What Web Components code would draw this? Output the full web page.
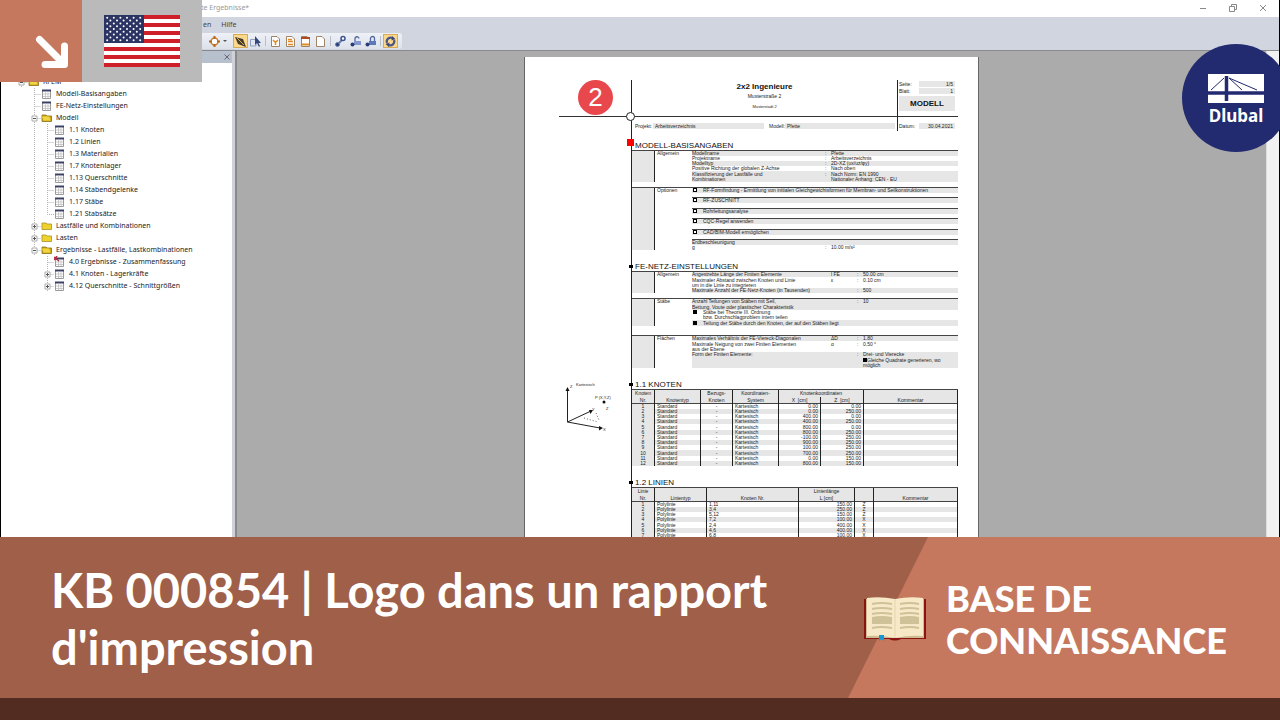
<!DOCTYPE html>
<html lang="fr">
<head>
<meta charset="utf-8">
<title>KB 000854 | Logo dans un rapport d'impression</title>
<style>
  body {
    margin: 0;
    font-family: "Liberation Sans", Arial, sans-serif;
  }
</style>
</head>
<body>
<kb-cover>
  <lang-badge slot="badge"></lang-badge>
  <dlubal-logo slot="logo"></dlubal-logo>
  <app-window slot="picture">
    <app-toolbar slot="toolbar"></app-toolbar>
    <nav-tree slot="tree"></nav-tree>
    <report-page></report-page>
  </app-window>
  <title-banner slot="banner">
    KB 000854 | Logo dans un rapport d'impression
    <span slot="category">BASE DE CONNAISSANCE</span>
  </title-banner>
</kb-cover>

<script>
class KbCover extends HTMLElement {
  constructor() {
    super();
    this.attachShadow({mode: 'open'}).innerHTML = `
      <style>
        :host {
          display: flex;
          flex-direction: column;
          height: 100vh;
          position: relative;
          overflow: hidden;
        }
        .picture {
          flex: 1;
          min-height: 0;
          display: flex;
        }
        ::slotted([slot=picture]) { flex: 1; min-width: 0; }
        ::slotted([slot=badge]) { position: absolute; left: 0; top: 0; }
        ::slotted([slot=logo]) { position: absolute; right: -10px; top: 44px; }
        footer { height: 22px; background: #522c20; }
      </style>
      <div class="picture"><slot name="picture"></slot></div>
      <slot name="banner"></slot>
      <footer></footer>
      <slot name="badge"></slot>
      <slot name="logo"></slot>
    `;
  }
}

class LangBadge extends HTMLElement {
  constructor() {
    super();
    this.attachShadow({mode: 'open'});
    this.render();
  }
  render() {
    let stripes = '';
    for (let i = 0; i < 13; i += 2) {
      stripes += `<rect y="${i * 4}" width="76" height="4" fill="#cf1f28"/>`;
    }
    let stars = '';
    for (let r = 0; r < 9; r++) {
      const count = r % 2 ? 5 : 6;
      for (let c = 0; c < count; c++) {
        stars += `<circle cx="${(r % 2 ? 6.4 : 3.2) + c * 6.6}" cy="${2.8 + r * 2.8}" r="1" fill="#fff"/>`;
      }
    }
    this.shadowRoot.innerHTML = `
      <style>
        :host { display: flex; }
        .arrow { width: 82px; height: 82px; background: #c5785e; }
        .flag {
          width: 120px;
          height: 82px;
          background: #bababa;
          display: grid;
          place-items: center;
        }
        svg { display: block; }
      </style>
      <div class="arrow">
        <svg width="82" height="82" fill="none" stroke="#fff" stroke-width="7" stroke-linecap="round" stroke-linejoin="round">
          <path d="M39.500 39.500L64 64M64.500 46V64.500H45"/>
        </svg>
      </div>
      <div class="flag">
        <svg width="76" height="52" role="img" aria-label="USA">
          <rect width="76" height="52" fill="#fff"/>
          ${stripes}
          <rect width="40" height="28" fill="#2b3563"/>
          ${stars}
        </svg>
      </div>
    `;
  }
}

class DlubalLogo extends HTMLElement {
  constructor() {
    super();
    this.attachShadow({mode: 'open'}).innerHTML = `
      <style>
        :host {
          display: flex;
          flex-direction: column;
          align-items: center;
          box-sizing: border-box;
          width: 108px;
          height: 108px;
          padding-top: 30px;
          border-radius: 50%;
          background: #222a70;
          color: #fff;
          font: bold 17px/26px "Noto Sans", "Open Sans", sans-serif;
        }
        svg { display: block; }
      </style>
      <svg width="56" height="29">
        <rect width="56" height="29" fill="#fff"/>
        <path d="M0 19H56" stroke="#222a70" stroke-width="3.500"/>
        <path d="M18.500 2V27" stroke="#222a70" stroke-width="3.500"/>
        <path d="M16 4L3 16M21 4L34 16M21 4L49 16" stroke="#222a70" stroke-width="1" fill="none"/>
      </svg>
      <span>Dlubal</span>
    `;
  }
}

class AppWindow extends HTMLElement {
  constructor() {
    super();
    this.attachShadow({mode: 'open'}).innerHTML = `
      <style>
        :host {
          display: flex;
          flex-direction: column;
          background: #fff;
          border-right: 1px solid #000;
          font: 7px/16px "Noto Sans", "Open Sans", sans-serif;
        }
        .title {
          display: flex;
          justify-content: space-between;
          height: 17px;
          padding: 0 6px 0 201px;
          color: #999;
        }
        .controls { display: flex; gap: 10px; }
        button {
          width: 20px;
          height: 16px;
          padding: 0;
          border: 0;
          background: none;
          color: #888;
        }
        .controls svg, .close svg { display: block; margin: auto; fill: none; stroke: currentColor; }
        .menu {
          display: flex;
          gap: 10px;
          height: 16px;
          padding-left: 203px;
          background: #d0d5df;
          color: #444;
        }
        .menu a { color: inherit; text-decoration: none; }
        .tools { background: #d0d5df; height: 17px; border-bottom: 1px solid #87898d; }
        .body {
          flex: 1;
          min-height: 0;
          display: flex;
          overflow: hidden;
        }
        .side {
          width: 232px;
          flex: none;
          box-sizing: border-box;
          border-left: 1px solid #000;
        }
        .side header {
          display: flex;
          justify-content: flex-end;
          height: 12px;
          background: #b7c1cd;
        }
        .close { width: 11px; height: 12px; color: #667; }
        .split {
          width: 3px;
          flex: none;
          background: #cfd1d6;
          border-right: 2px solid #87898d;
        }
        .work {
          flex: 1;
          min-width: 0;
          padding-top: 6px;
          background: #ababab;
          display: flex;
          justify-content: center;
          align-items: flex-start;
        }
        .scroll { width: 12px; background: #f1f1f1; border-left: 1px solid #ddd; }
      </style>
      <div class="title">
        <span>te Ergebnisse*</span>
        <div class="controls">
          <button aria-label="Minimieren"><svg width="8" height="8"><path d="M1 4.500H7"/></svg></button>
          <button aria-label="Wiederherstellen"><svg width="8" height="8"><path d="M.5 2.500H5.500V7.500H.5ZM2.500 2V.5H7.500V5.500H6"/></svg></button>
          <button aria-label="Beenden"><svg width="8" height="8"><path d="M1 1L7 7M7 1L1 7"/></svg></button>
        </div>
      </div>
      <nav class="menu"><a href="#">en</a><a href="#">Hilfe</a></nav>
      <div class="tools"><slot name="toolbar"></slot></div>
      <div class="body">
        <aside class="side">
          <header><button class="close" aria-label="Schließen"><svg width="6" height="6"><path d="M.5 .5L5.500 5.500M5.500 .5L.5 5.500"/></svg></button></header>
          <slot name="tree"></slot>
        </aside>
        <div class="split"></div>
        <main class="work"><slot></slot></main>
        <div class="scroll"></div>
      </div>
    `;
  }
}

const sheet = '<path d="M2.500 1.500H8L10.500 4V11.500H2.500Z" fill="#fff" stroke="#a08468"/>';
const toolIcons = {
  target: '<circle cx="6.500" cy="6.500" r="3.500" fill="#fff" stroke="#d08030" stroke-width="1.500"/><path d="M6.500 1V4M6.500 9V12M1 6.500H4M9 6.500H12" stroke="#b06a20" stroke-width="2"/>',
  pen: '<path d="M1 2L9 4L12 12L4 9Z" fill="#453c30"/><path d="M3 3L10 10" stroke="#e2a83c"/>',
  select: '<path d="M1.500 4.500H7V11H1.500Z" fill="#dfe6f4" stroke="#93a0bc"/><path d="M6 1V10L8 8L10 12L11 11L9.500 8H12Z" fill="#34487c"/>',
  sheetY: sheet + '<path d="M4 5L6.500 7.500L9 5M6.500 7V10" stroke="#e08a28" stroke-width="1.500" fill="none"/>',
  sheetLines: sheet + '<path d="M4 4.500H8M4 6.500H9M4 9.500H9" stroke="#e08a28" stroke-width="1.300"/>',
  sheetHead: sheet + '<path d="M2 3H11" stroke="#b04a20" stroke-width="2"/><path d="M3 9.500H10" stroke="#e08a28" stroke-width="2"/>',
  sheet: sheet,
  link: '<circle cx="3.500" cy="9.500" r="2" fill="#283c78" stroke="#6a7cae"/><path d="M5 8L8 5" stroke="#6a7cae" stroke-width="2"/><circle cx="9" cy="3.500" r="2" fill="#fff" stroke="#3c5392" stroke-width="1.500"/>',
  lockOpen: '<path d="M6 6V4A2 2 0 0 1 10 3.500" stroke="#53699f" stroke-width="1.300" fill="none"/><path d="M5 6H12V10H5Z" fill="#8498cf"/><circle cx="3.500" cy="9.500" r="2" fill="#283c78"/>',
  lock: '<path d="M6.500 6V3.500A2 2 0 0 1 10.500 3.500V6" stroke="#53699f" stroke-width="1.300" fill="none"/><path d="M5 6H12V10H5Z" fill="#5c78bc"/><circle cx="3.500" cy="9.500" r="2" fill="#283c78"/>',
  refresh: '<path d="M3 8A4 4 0 0 1 8.500 3M10 5A4 4 0 0 1 4.500 10" stroke="#4a5688" stroke-width="2.200" fill="none"/><path d="M8 1L11.500 4L7.500 5.500ZM5 12L1.500 9L5.500 7.500Z" fill="#3c4678"/>'
};

class AppToolbar extends HTMLElement {
  constructor() {
    super();
    this.attachShadow({mode: 'open'});
    this.render();
  }
  button(name, active) {
    return `<button class="${active ? 'active' : ''}" aria-label="${name}"><svg width="13" height="13">${toolIcons[name]}</svg></button>`;
  }
  render() {
    const sep = '<i></i>';
    this.shadowRoot.innerHTML = `
      <style>
        :host {
          display: flex;
          align-items: center;
          box-sizing: border-box;
          width: 402px;
          height: 16px;
          padding-left: 207px;
          background: linear-gradient(#eef1f6, #dde2ea);
          border-radius: 0 3px 3px 0;
        }
        button {
          display: grid;
          place-items: center;
          width: 15px;
          height: 14px;
          padding: 0;
          border: 0;
          background: none;
        }
        .active { background: #fbd88a; box-shadow: inset 0 0 0 1px #d9a95a; }
        b { border: 2px solid transparent; border-top-color: #555; border-bottom: 0; margin: 0 6px 0 1px; }
        i { width: 1px; height: 10px; background: #b8bfca; margin: 0 2px; }
      </style>
      ${this.button('target')}<b></b>
      ${this.button('pen', true)}${this.button('select')}${sep}
      ${this.button('sheetY')}${this.button('sheetLines')}${this.button('sheetHead')}${this.button('sheet')}${sep}
      ${this.button('link')}${this.button('lockOpen')}${this.button('lock')}${sep}
      ${this.button('refresh', true)}
    `;
  }
}

// guides: one letter per indent column
// " " empty, "|" line, "t" branch, "l" last branch, "+" closed, "-" open
const treeItems = [
  ['-', 'open', 'RFEM'],
  [' t', 'table', 'Modell-Basisangaben'],
  [' t', 'table', 'FE-Netz-Einstellungen'],
  [' -', 'open', 'Modell'],
  [' |t', 'table', '1.1 Knoten'],
  [' |t', 'table', '1.2 Linien'],
  [' |t', 'table', '1.3 Materialien'],
  [' |t', 'table', '1.7 Knotenlager'],
  [' |t', 'table', '1.13 Querschnitte'],
  [' |t', 'table', '1.14 Stabendgelenke'],
  [' |t', 'table', '1.17 Stäbe'],
  [' |l', 'table', '1.21 Stabsätze'],
  [' +', 'folder', 'Lastfälle und Kombinationen'],
  [' +', 'folder', 'Lasten'],
  [' -', 'open', 'Ergebnisse - Lastfälle, Lastkombinationen'],
  ['  t', 'marked', '4.0 Ergebnisse - Zusammenfassung'],
  ['  +', 'table', '4.1 Knoten - Lagerkräfte'],
  ['  +', 'table', '4.12 Querschnitte - Schnittgrößen']
];

const tableIcon = '<path d="M1.500 2.500H9.500V10.500H1.500Z" fill="#fff" stroke="#9a9a9a"/><path d="M1 2.500H10" stroke="#3a3f66" stroke-width="2"/><path d="M4.500 3V10M7 3V10M2 6H9M2 8.500H9" stroke="#b9b9b9" stroke-width=".7"/>';
const treeIcons = {
  table: tableIcon,
  marked: tableIcon + '<path d="M0 1L5 5M0 4L3 0" stroke="#b02a3a" stroke-width="1.500"/>',
  folder: '<path d="M1 3H5L6 4H10.500V9.500H1Z" fill="#f0d22e" stroke="#a8902a" stroke-width=".8"/>',
  open: '<path d="M1 3H5L6 4H10.500V9.500H1Z" fill="#d3a818" stroke="#85701a" stroke-width=".8"/><path d="M1 4.500H8L9.500 8.500H2.500Z" fill="#f0d640"/>'
};

class NavTree extends HTMLElement {
  constructor() {
    super();
    this.attachShadow({mode: 'open'});
    this.render();
  }
  guide(kind) {
    const lines = {
      ' ': '',
      '|': 'M6.500 0V12',
      't': 'M6.500 0V12M6.500 6.500H13',
      'l': 'M6.500 0V6.500H13',
      '+': 'M6.500 0V12M6.500 6.500H13',
      '-': 'M6.500 0V12M6.500 6.500H13'
    };
    let box = '';
    if (kind === '+' || kind === '-') {
      box = '<path d="M4 4H9V9H4Z" fill="#fff" stroke="#aaa"/><path d="M5 6.500H8" stroke="#555"/>';
      if (kind === '+') box += '<path d="M6.500 5V8" stroke="#555"/>';
    }
    return `<svg width="13" height="12"><path d="${lines[kind]}" fill="none" stroke="#b5b5b5" stroke-dasharray="1 1"/>${box}</svg>`;
  }
  render() {
    const rows = treeItems.map(([guides, icon, text]) => `
      <li>${[...guides].map(g => this.guide(g)).join('')}<svg width="12" height="12">${treeIcons[icon]}</svg><a href="#">${text}</a></li>
    `).join('');
    this.shadowRoot.innerHTML = `
      <style>
        :host {
          display: block;
          padding: 13px 0 0 14px;
          font: 7px/12px "Noto Sans", "Open Sans", sans-serif;
        }
        ul { margin: 0; padding: 0; list-style: none; }
        li { display: flex; height: 12px; white-space: nowrap; }
        svg { flex: none; }
        a { color: #1c1c1c; text-decoration: none; margin-left: 3px; }
      </style>
      <ul>${rows}</ul>
    `;
  }
}

// heading with its margin column on the left and the content below
class ReportSection extends HTMLElement {
  constructor() {
    super();
    this.attachShadow({mode: 'open'});
  }
  connectedCallback() {
    this.shadowRoot.innerHTML = `
      <style>
        :host {
          display: grid;
          grid-template-columns: 106px 1fr;
        }
        .content { border-left: 1px solid #222; padding-top: var(--lead, 11px); }
        h2 {
          position: relative;
          margin: 0;
          padding-left: 3px;
          font-size: 8px;
          line-height: 11px;
          font-weight: normal;
          color: #111;
        }
        h2::before {
          content: "";
          position: absolute;
          left: -3px;
          top: 4px;
          width: 4px;
          height: 3px;
          background: #000;
        }
        :host([first]) h2::before {
          left: -5px;
          top: -1px;
          width: 7px;
          height: 7px;
          background: #f00;
        }
        .margin { padding-top: 14px; }
      </style>
      <div class="margin"><slot name="margin"></slot></div>
      <div class="content"><h2>${this.getAttribute('heading')}</h2><slot></slot></div>
    `;
  }
}

// rows: {t: text, s: symbol, v: value, g: grey, l: line above, c: tick box, vc: tick box at the value, n: no colon}
const blocks = {
  basis: {label: 'Allgemein', rows: [
    {t: 'Modellname', v: 'Pfette', g: 1},
    {t: 'Projektname', v: 'Arbeitsverzeichnis'},
    {t: 'Modelltyp', v: '2D-XZ (ux/uz/φy)', g: 1},
    {t: 'Positive Richtung der globalen Z-Achse', v: 'Nach oben'},
    {t: 'Klassifizierung der Lastfälle und', v: 'Nach Norm: EN 1990', g: 1},
    {t: 'Kombinationen', v: 'Nationaler Anhang: CEN - EU', g: 1, n: 1}
  ]},
  options: {label: 'Optionen', rows: [
    {t: 'RF-Formfindung - Ermittlung von initialen Gleichgewichtsformen für Membran- und Seilkonstruktionen', g: 1, c: 0},
    {},
    {t: 'RF-ZUSCHNITT', g: 1, l: 1, c: 0},
    {},
    {t: 'Rohrleitungsanalyse', g: 1, l: 1, c: 0},
    {},
    {t: 'CQC-Regel anwenden', g: 1, l: 1, c: 0},
    {},
    {t: 'CAD/BIM-Modell ermöglichen', g: 1, l: 1, c: 0},
    {},
    {t: 'Erdbeschleunigung', g: 1, l: 1, n: 1},
    {t: 'g', v: '10.00 m/s²'}
  ]},
  mesh: {label: 'Allgemein', rows: [
    {t: 'Angestrebte Länge der Finiten Elemente', s: 'l FE', v: '50.00 cm', g: 1},
    {t: 'Maximaler Abstand zwischen Knoten und Linie', s: 'ε', v: '0.10 cm'},
    {t: 'um in die Linie zu integrieren', n: 1},
    {t: 'Maximale Anzahl der FE-Netz-Knoten (in Tausenden)', v: '500', g: 1}
  ]},
  members: {label: 'Stäbe', rows: [
    {t: 'Anzahl Teilungen von Stäben mit Seil,', v: '10', g: 1},
    {t: 'Bettung, Voute oder plastischer Charakteristik', g: 1, n: 1},
    {t: 'Stäbe bei Theorie III. Ordnung', c: 1},
    {t: 'bzw. Durchschlagproblem intern teilen', c: 2},
    {t: 'Teilung der Stäbe durch den Knoten, der auf den Stäben liegt', g: 1, c: 1}
  ]},
  surfaces: {label: 'Flächen', rows: [
    {t: 'Maximales Verhältnis der FE-Viereck-Diagonalen', s: 'ΔD', v: '1.80', g: 1},
    {t: 'Maximale Neigung von zwei Finiten Elementen', s: 'α', v: '0.50 °'},
    {t: 'aus der Ebene', n: 1},
    {t: 'Form der Finiten Elemente:', v: 'Drei- und Vierecke', g: 1},
    {v: 'Gleiche Quadrate generieren, wo', g: 1, n: 1, vc: 1},
    {v: 'möglich', g: 1, n: 1}
  ]}
};

class ReportBlock extends HTMLElement {
  constructor() {
    super();
    this.attachShadow({mode: 'open'});
  }
  connectedCallback() {
    this.render(blocks[this.getAttribute('name')]);
  }
  cells(row) {
    if (row.c !== undefined) {
      const box = row.c === 2 ? '<s></s>' : `<input type="checkbox" ${row.c ? 'checked' : ''}>`;
      return `<td colspan="4"><label>${box}${row.t}</label></td>`;
    }
    const value = row.vc ? `<label class="near"><input type="checkbox" checked>${row.v}</label>` : row.v || '';
    return `<td>${row.t || ''}</td><td>${row.s || ''}</td><td>${row.v && !row.n ? ':' : ''}</td><td>${value}</td>`;
  }
  render(block) {
    const count = block.rows.length;
    const rows = block.rows.map((row, i) => `
      <tr class="${row.g ? 'grey' : ''} ${row.l ? 'line' : ''} ${row.t || row.v ? '' : 'blank'}">
        ${i === 0 ? `<td class="gutter" rowspan="${count}"></td><td class="label" rowspan="${count}">${block.label}</td>` : ''}
        ${this.cells(row)}
      </tr>
    `).join('');
    this.shadowRoot.innerHTML = `
      <style>
        :host { display: block; margin-bottom: 6px; }
        :host([gap]) { margin-bottom: 10px; }
        :host(:last-of-type) { margin-bottom: 0; }
        table {
          width: 100%;
          table-layout: fixed;
          border-spacing: 0;
          font-size: 5px;
          line-height: 5px;
          color: #222;
          white-space: nowrap;
          box-shadow: 0 -1px #444;
        }
        .gutter { border-right: 1px solid #222; background: #e6e6e6; }
        .label { vertical-align: top; }
        .text { width: 132px; }
        .symbol { width: 1px; }
        :host([symbols]) .text { width: 139px; }
        :host([symbols]) .symbol { width: 26px; }
        .colon { width: 6px; }
        tr { height: 5px; }
        tr:nth-child(5n), :host([symbols]) tr:nth-child(2) { height: 6px; }
        tr.blank { height: 4px; }
        tr.blank:nth-child(4n) { height: 5px; }
        td { padding: 0; }
        td.label { padding-left: 2px; }
        .grey td:not(.label) { background: #e6e6e6; }
        .line td { padding-top: 1px; box-shadow: inset 0 1px #444; }
        label { display: flex; height: 5px; gap: 6px; padding-left: 1px; }
        label.near { gap: 0; padding: 0; }
        input, s {
          appearance: none;
          width: 4px;
          height: 4px;
          margin: 0;
          box-sizing: border-box;
          border: 1px solid #000;
          background: #fff;
        }
        input:checked { background: #000; }
        s { border: 0; background: none; }
      </style>
      <table>
        <colgroup><col style="width: 23px"><col style="width: 37px"><col class="text"><col class="symbol"><col class="colon"><col></colgroup>
        <tbody>${rows}</tbody>
      </table>
    `;
  }
}

const dataTables = {
  nodes: {
    widths: [23, 46, 32, 46, 42, 43, 0],
    align: ['center', 'left', 'center', 'left', 'right', 'right', 'left'],
    head: [['Knoten', '', 'Bezugs-', 'Koordinaten-', 'Knotenkoordinaten*', ''],
           ['Nr.', 'Knotentyp', 'Knoten', 'System', 'X&nbsp; [cm]', 'Z&nbsp; [cm]', 'Kommentar']],
    rows: [['0.00', '0.00'], ['0.00', '250.00'], ['400.00', '0.00'], ['400.00', '250.00'],
           ['800.00', '0.00'], ['800.00', '250.00'], ['-100.00', '250.00'], ['900.00', '250.00'],
           ['100.00', '250.00'], ['700.00', '250.00'], ['0.00', '150.00'], ['800.00', '150.00']
          ].map(([x, z], i) => [i + 1, 'Standard', '-', 'Kartesisch', x, z, ''])
  },
  lines: {
    widths: [23, 52, 92, 56, 19, 0],
    align: ['center', 'left', 'left', 'right', 'center', 'left'],
    head: [['Linie', '', '', 'Linienlänge', '', ''],
           ['Nr.', 'Linientyp', 'Knoten Nr.', 'L [cm]', '', 'Kommentar']],
    rows: [['1,11', '150.00', 'Z'], ['3,4', '250.00', 'Z'], ['5,12', '150.00', 'Z'], ['7,2', '100.00', 'X'],
           ['2,4', '400.00', 'X'], ['4,6', '400.00', 'X'], ['6,8', '100.00', 'X']
          ].map(([n, l, d], i) => [i + 1, 'Polylinie', n, l, d, ''])
  }
};

class ReportTable extends HTMLElement {
  constructor() {
    super();
    this.attachShadow({mode: 'open'});
  }
  connectedCallback() {
    this.render(dataTables[this.getAttribute('name')]);
  }
  render(data) {
    const cols = data.widths.map(w => w ? `<col style="width: ${w}px">` : '<col>').join('');
    const head = data.head.map(row => `
      <tr>${row.map(h => h.endsWith('*') ? `<th colspan="2">${h.slice(0, -1)}</th>` : `<th>${h}</th>`).join('')}</tr>
    `).join('');
    const rows = data.rows.map(row => `
      <tr>${row.map((c, i) => `<td class="${data.align[i]}">${c}</td>`).join('')}</tr>
    `).join('');
    this.shadowRoot.innerHTML = `
      <style>
        :host { display: block; }
        table {
          width: 100%;
          table-layout: fixed;
          border-spacing: 0;
          font-size: 5px;
          line-height: 5px;
          color: #222;
          white-space: nowrap;
          box-shadow: 0 -1px #444;
        }
        th { height: 7px; padding: 0; font-weight: normal; background: #e6e6e6; }
        tr:last-child th { box-shadow: inset 0 -1px #444; }
        th, td { border-right: 1px solid #222; }
        td { height: 5px; padding: 0 2px; }
        tr:nth-child(5n) td { height: 6px; }
        tr:nth-child(even) td, td:first-child { background: #e6e6e6; }
        .center { text-align: center; }
        .right { text-align: right; }
      </style>
      <table>
        <colgroup>${cols}</colgroup>
        <thead>${head}</thead>
        <tbody>${rows}</tbody>
      </table>
    `;
  }
}

class ReportPage extends HTMLElement {
  constructor() {
    super();
    this.attachShadow({mode: 'open'}).innerHTML = `
      <style>
        :host {
          display: block;
          box-sizing: border-box;
          width: 455px;
          padding: 23px 20px 40px 0;
          background: #fff;
          border: solid #666;
          border-width: 0 1px;
          font: 5px/7px "Liberation Sans", Arial, sans-serif;
          color: #222;
        }
        .head { display: grid; grid-template-columns: 106px 1fr; position: relative; }
        .mark { margin-left: 34px; padding-left: 19px; border-bottom: 1px solid #333; }
        .mark b {
          display: block;
          width: 35px;
          height: 35px;
          border-radius: 50%;
          background: #e8474c;
          color: #fff;
          font-weight: normal;
          font-size: 26px;
          line-height: 35px;
          text-align: center;
        }
        .company {
          display: grid;
          grid-template-columns: 1fr 61px;
          border-left: 1px solid #222;
          border-bottom: 1px solid #333;
          height: 36px;
        }
        .name { text-align: center; }
        h1 { margin: 2px 0; font-size: 8px; line-height: 9px; color: #111; }
        p { margin: 0 0 3px; }
        .small { font-size: 4px; }
        .info, .date { border-left: 1px solid #222; padding-right: 3px; }
        .info { padding-left: 1px; }
        .info div { display: grid; grid-template-columns: 20px 1fr; margin-top: 1px; line-height: 6px; }
        span { background: #e6e6e6; text-align: right; padding: 0 2px; }
        .info strong {
          display: block;
          margin-top: 2px;
          background: #e6e6e6;
          color: #111;
          font-size: 8px;
          line-height: 15px;
          text-align: center;
        }
        .project {
          margin-left: 106px;
          display: grid;
          grid-template-columns: 21px 113px 19px 1fr 61px;
          box-sizing: border-box;
          height: 23px;
          border-left: 1px solid #222;
          line-height: 6px;
        }
        .project > * { margin-top: 6px; height: 6px; }
        .project > i { font-style: normal; padding-left: 3px; }
        .project > span { text-align: left; margin-right: 2px; }
        .project > .date {
          display: grid;
          grid-template-columns: 20px 1fr;
          margin-top: 0;
          padding-top: 6px;
          padding-left: 1px;
          height: 8px;
        }
        .date span { height: 6px; }
        .dot {
          position: absolute;
          left: 101px;
          bottom: -4px;
          width: 9px;
          height: 9px;
          box-sizing: border-box;
          border: 1px solid #222;
          border-radius: 50%;
          background: #fff;
        }
        report-section[first] { --lead: 0; }
        svg { display: block; margin-left: 37px; }
        text { font-size: 4px; fill: #222; }
      </style>
      <div class="head">
        <div class="mark"><b>2</b></div>
        <div class="company">
          <div class="name">
            <h1>2x2 Ingenieure</h1>
            <p>Musterstraße 2</p>
            <p class="small">Musterstadt 2</p>
          </div>
          <div class="info">
            <div>Seite: <span>1/5</span></div>
            <div>Blatt: <span>1</span></div>
            <strong>MODELL</strong>
          </div>
        </div>
        <div class="dot"></div>
      </div>
      <div class="project">
        <i>Projekt:</i><span>Arbeitsverzeichnis</span>
        <i>Modell:</i><span>Pfette</span>
        <div class="date">Datum: <span>30.04.2021</span></div>
      </div>
      <report-section first heading="MODELL-BASISANGABEN">
        <report-block name="basis"></report-block>
        <report-block name="options"></report-block>
      </report-section>
      <report-section heading="FE-NETZ-EINSTELLUNGEN">
        <report-block symbols name="mesh"></report-block>
        <report-block symbols gap name="members"></report-block>
        <report-block symbols name="surfaces"></report-block>
      </report-section>
      <report-section heading="1.1 KNOTEN">
        <svg slot="margin" width="58" height="50" fill="none" stroke="#222">
          <path d="M5.500 8V40L29 29M5.500 40L38 46"/>
          <path d="M5.500 5L7.500 9H3.500ZM31 28L27 28L28.500 32ZM41 46L37 44V48.500Z" fill="#111" stroke="none"/>
          <circle cx="42" cy="20" r="1.500" fill="#111" stroke="none"/>
          <path d="M22 36L36 40M34 31L37 38" stroke-dasharray="1 2" stroke-width=".7"/>
          <g stroke="none">
            <text x="8" y="6">Z</text><text x="14" y="4">Kartesisch</text>
            <text x="33" y="17">P (X,Y,Z)</text><text x="30" y="29">Y</text>
            <text x="44" y="28">Z</text><text x="41" y="49">X</text>
          </g>
        </svg>
        <report-table name="nodes"></report-table>
      </report-section>
      <report-section heading="1.2 LINIEN">
        <report-table name="lines"></report-table>
      </report-section>
    `;
  }
}

class TitleBanner extends HTMLElement {
  constructor() {
    super();
    this.attachShadow({mode: 'open'}).innerHTML = `
      <style>
        :host {
          display: grid;
          grid-template-columns: 1fr 432px;
          min-height: 161px;
          background: #9f5f49;
          color: #fff;
          font-family: Lato, "Open Sans", sans-serif;
        }
        h1 {
          margin: 0;
          padding: 25px 20px 0 51px;
          font-size: 47px;
          line-height: 57px;
          font-weight: bold;
        }
        .panel { display: grid; }
        .panel > * { grid-area: 1 / 1; }
        .shade { background: #c5785e; clip-path: polygon(80px 0, 100% 0, 100% 100%, 0 100%); }
        .category {
          z-index: 1;
          display: flex;
          align-items: center;
          gap: 20px;
          padding: 2px 20px 0 16px;
          font-size: 36px;
          line-height: 42px;
          font-weight: 900;
        }
        svg { flex: none; }
      </style>
      <h1><slot></slot></h1>
      <div class="panel">
        <div class="shade"></div>
        <div class="category">
          <svg width="62" height="44">
            <path d="M0 2H62V42H37Q31 45 25 42H0Z" fill="#8a1414"/>
            <path d="M2 2H60V41H2Z" fill="#cdbb92"/>
            <path d="M3 1Q16 -1 31 2Q46 -1 59 1V39Q45 38 31 41Q17 38 3 39Z" fill="#f7e8c8"/>
            <path d="M31 2V41" stroke="#e6d5ad"/>
            <g fill="none" stroke="#cfc198" stroke-width="2.200">
              <path d="M8 7Q17 5 28 7M8 12Q17 10 28 12M8 17Q17 15 28 17M8 31Q17 29 28 31"/>
              <path d="M36 7Q46 5 55 7M36 12Q46 10 55 12M36 17Q46 15 55 17M36 31Q46 29 55 31"/>
            </g>
            <path d="M8 20Q18 18 28 20V27H8ZM36 20Q46 18 55 20V27H36Z" fill="#cfc198"/>
            <path d="M15 38H20V44L17.500 42L15 44Z" fill="#109ad8"/>
          </svg>
          <slot name="category"></slot>
        </div>
      </div>
    `;
  }
}

customElements.define('kb-cover', KbCover);
customElements.define('lang-badge', LangBadge);
customElements.define('dlubal-logo', DlubalLogo);
customElements.define('app-window', AppWindow);
customElements.define('app-toolbar', AppToolbar);
customElements.define('nav-tree', NavTree);
customElements.define('report-section', ReportSection);
customElements.define('report-block', ReportBlock);
customElements.define('report-table', ReportTable);
customElements.define('report-page', ReportPage);
customElements.define('title-banner', TitleBanner);
</script>
</body>
</html>
